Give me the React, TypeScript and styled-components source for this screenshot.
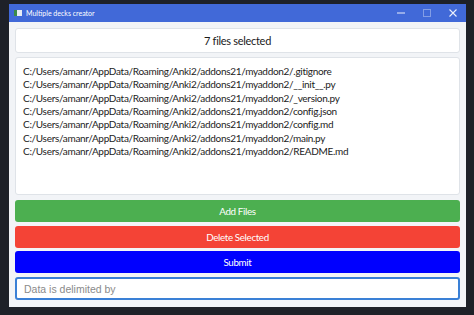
import React from "react";
import styled, { createGlobalStyle } from "styled-components";

const files = [
  "C:/Users/amanr/AppData/Roaming/Anki2/addons21/myaddon2/.gitignore",
  "C:/Users/amanr/AppData/Roaming/Anki2/addons21/myaddon2/__init__.py",
  "C:/Users/amanr/AppData/Roaming/Anki2/addons21/myaddon2/_version.py",
  "C:/Users/amanr/AppData/Roaming/Anki2/addons21/myaddon2/config.json",
  "C:/Users/amanr/AppData/Roaming/Anki2/addons21/myaddon2/config.md",
  "C:/Users/amanr/AppData/Roaming/Anki2/addons21/myaddon2/main.py",
  "C:/Users/amanr/AppData/Roaming/Anki2/addons21/myaddon2/README.md",
];

const GlobalStyle = createGlobalStyle`
  html, body {
    margin: 0;
    background: #1e2128;
    font-family: Lato, "Open Sans", sans-serif;
  }
`;

const Desktop = styled.div`
  width: 474px;
  height: 315px;
  padding: 4px 8px 0 9px;
  box-sizing: border-box;
  overflow: hidden;
`;

const Window = styled.div`
  width: 457px;
  height: 303px;
  background: #f2f4f7;
  display: flex;
  flex-direction: column;
`;

const TitleBar = styled.div`
  height: 18px;
  flex-shrink: 0;
  background: #4169d8;
  display: flex;
  align-items: center;
  padding-left: 5px;
  color: #ffffff;
  font-size: 7px;
`;

const AppIcon = styled.div`
  width: 5px;
  height: 6px;
  background: #e8ecf4;
  border-left: 3px solid #3b8a4a;
  margin-right: 4px;
`;

const TitleText = styled.span`
  flex: 1;
`;

const Controls = styled.div`
  display: flex;
  height: 100%;
`;

const Control = styled.div<{ $dim?: boolean }>`
  width: 26px;
  display: flex;
  align-items: center;
  justify-content: center;
  opacity: ${(p) => (p.$dim ? 0.35 : 0.9)};
`;

const Content = styled.div`
  flex: 1;
  display: flex;
  flex-direction: column;
  padding: 6px 6px 0 6px;
`;

const Header = styled.div`
  height: 23px;
  background: #ffffff;
  border: 1px solid #dfe3e8;
  border-radius: 3px;
  display: flex;
  align-items: center;
  justify-content: center;
  font-size: 11px;
  letter-spacing: -0.3px;
  color: #1a1a1a;
`;

const FileList = styled.div`
  margin-top: 4px;
  background: #ffffff;
  border: 1px solid #dfe3e8;
  border-radius: 3px;
  padding: 7px 7px;
  box-sizing: border-box;
  height: 138px;
  display: flex;
  flex-direction: column;
`;

const FileRow = styled.div`
  font-size: 10px;
  letter-spacing: -0.3px;
  line-height: 13.35px;
  color: #222222;
  white-space: nowrap;
`;

const Button = styled.div<{ $bg: string; $gap: number }>`
  height: 22px;
  margin-top: ${(p) => p.$gap}px;
  background: ${(p) => p.$bg};
  border-radius: 3px;
  display: flex;
  align-items: center;
  justify-content: center;
  color: #ffffff;
  font-size: 9.8px;
  letter-spacing: -0.35px;
`;

const Input = styled.input`
  height: 23px;
  margin-top: 4px;
  border: 2px solid #3a80d6;
  border-radius: 3px;
  padding: 0 7px;
  font-family: "Liberation Sans", Arial, sans-serif;
  font-size: 10.5px;
  color: #333;
  background: #ffffff;
  outline: none;
  box-sizing: border-box;
  &::placeholder {
    color: #8a8a8a;
  }
`;

export default function App() {
  return (
    <>
      <GlobalStyle />
      <Desktop>
        <Window>
          <TitleBar>
            <AppIcon />
            <TitleText>Multiple decks creator</TitleText>
            <Controls>
              <Control>
                <svg width="8" height="8" viewBox="0 0 8 8">
                  <line x1="0" y1="4" x2="8" y2="4" stroke="#fff" strokeWidth="1" />
                </svg>
              </Control>
              <Control $dim>
                <svg width="8" height="8" viewBox="0 0 8 8">
                  <rect x="0.5" y="0.5" width="7" height="7" fill="none" stroke="#fff" strokeWidth="1" />
                </svg>
              </Control>
              <Control>
                <svg width="8" height="8" viewBox="0 0 8 8">
                  <path d="M0.5 0.5L7.5 7.5M7.5 0.5L0.5 7.5" stroke="#fff" strokeWidth="1.1" />
                </svg>
              </Control>
            </Controls>
          </TitleBar>
          <Content>
            <Header>7 files selected</Header>
            <FileList>
              {files.map((f) => (
                <FileRow key={f}>{f}</FileRow>
              ))}
            </FileList>
            <Button $bg="#4caf50" $gap={5}>Add Files</Button>
            <Button $bg="#f44336" $gap={4}>Delete Selected</Button>
            <Button $bg="#0000ff" $gap={3}>Submit</Button>
            <Input placeholder="Data is delimited by" />
          </Content>
        </Window>
      </Desktop>
    </>
  );
}
